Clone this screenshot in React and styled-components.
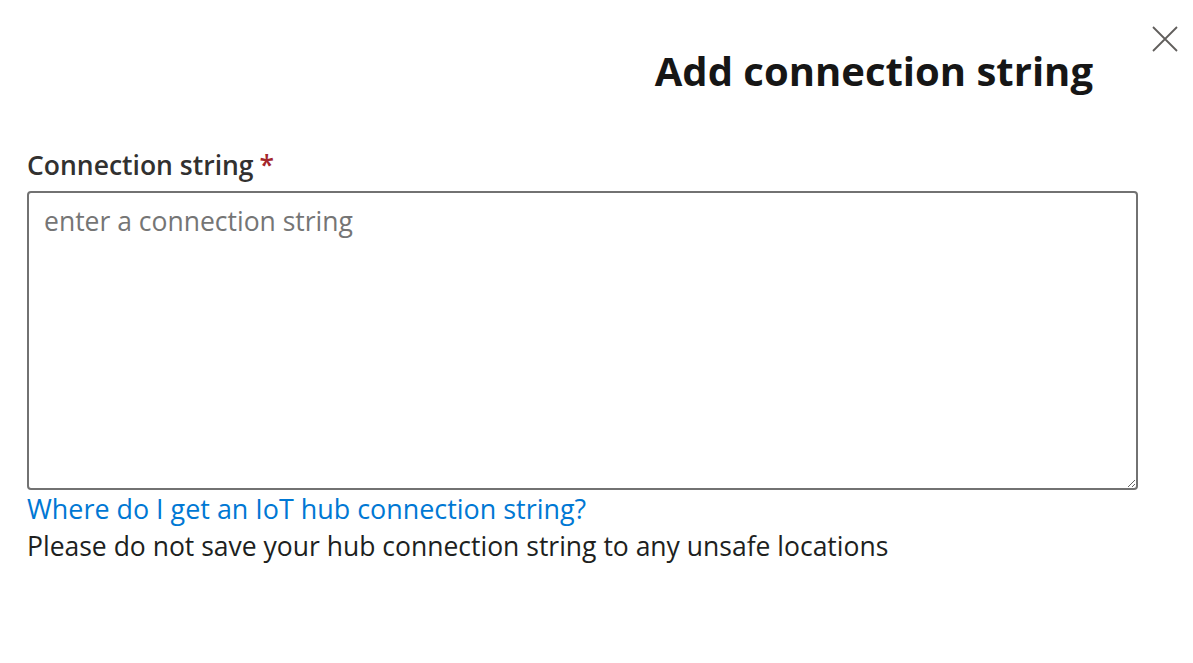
import React from "react";
import styled, { createGlobalStyle } from "styled-components";

const GlobalStyle = createGlobalStyle`
  html, body {
    margin: 0;
    padding: 0;
    background: #ffffff;
    font-family: "Open Sans", "Noto Sans", sans-serif;
  }
`;

const Panel = styled.div`
  width: 1193px;
  height: 663px;
  box-sizing: border-box;
  padding: 0 55px 0 27px;
  background: #ffffff;
`;

const Header = styled.div`
  display: flex;
  justify-content: flex-end;
  align-items: flex-start;
  gap: 59px;
  margin-right: -40px;
  padding-top: 26px;
`;

const Title = styled.h1`
  margin: 20px 0 0;
  font-size: 40px;
  font-weight: 700;
  line-height: 50px;
  color: #161616;
`;

const CloseButton = styled.button`
  width: 26px;
  height: 26px;
  padding: 0;
  border: none;
  background: transparent;
  cursor: pointer;
  svg {
    display: block;
  }
`;

const Field = styled.div`
  display: flex;
  flex-direction: column;
  margin-top: 53px;
`;

const Label = styled.label`
  font-size: 26.5px;
  font-weight: 600;
  line-height: 32px;
  color: #323130;
  margin-bottom: 10px;
`;

const Required = styled.span`
  color: #a4262c;
  margin-left: 6px;
`;

const TextArea = styled.textarea`
  width: 1111px;
  height: 299px;
  box-sizing: border-box;
  border: 2px solid #727272;
  border-radius: 4px;
  padding: 10px 15px;
  font-family: "Open Sans", "Noto Sans", sans-serif;
  font-size: 26.5px;
  line-height: 36px;
  color: #323130;
  resize: both;
  outline: none;
  &::placeholder {
    color: #757575;
  }
`;

const HelpLink = styled.a`
  font-size: 26.9px;
  line-height: 36px;
  color: #0078d4;
  text-decoration: none;
  margin-top: 1px;
`;

const Note = styled.p`
  margin: 0;
  font-size: 26.5px;
  line-height: 38px;
  color: #201f1e;
`;

export default function App() {
  return (
    <>
      <GlobalStyle />
      <Panel>
        <Header>
          <Title>Add connection string</Title>
          <CloseButton aria-label="Close">
            <svg width="26" height="26" viewBox="0 0 26 26">
              <path d="M1 1 L25 25 M25 1 L1 25" stroke="#605e5c" strokeWidth="1.8" fill="none" />
            </svg>
          </CloseButton>
        </Header>
        <Field>
          <Label htmlFor="conn">
            Connection string<Required>*</Required>
          </Label>
          <TextArea id="conn" placeholder="enter a connection string" />
          <HelpLink href="#">Where do I get an IoT hub connection string?</HelpLink>
          <Note>Please do not save your hub connection string to any unsafe locations</Note>
        </Field>
      </Panel>
    </>
  );
}
